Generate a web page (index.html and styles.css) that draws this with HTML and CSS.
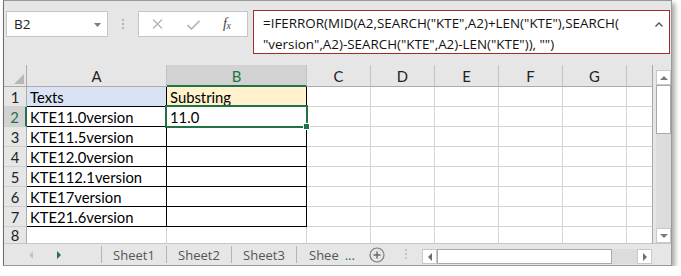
FILE: index.html
```html
<!DOCTYPE html>
<html>
<head>
<meta charset="utf-8">
<link rel="stylesheet" href="styles.css">
</head>
<body>
<div class="win">
  <div class="fbar">
    <div class="namebox"><span class="nb-text">B2</span>
      <svg class="nb-arrow" width="8" height="4" viewBox="0 0 8 4"><path d="M0 0H7L3.5 4Z" fill="#7a7a7a"/></svg>
    </div>
    <div class="vdots"><svg width="3" height="11" viewBox="0 0 3 11"><rect x="0" y="0" width="2" height="2" fill="#b5b5b5"/><rect x="0" y="4" width="2" height="2" fill="#b5b5b5"/><rect x="0" y="8" width="2" height="2" fill="#b5b5b5"/></svg></div>
    <div class="btns">
      <svg class="ic-x" width="11" height="10" viewBox="0 0 11 10"><path d="M1 0.5L10 9.5M10 0.5L1 9.5" stroke="#b3b3b3" stroke-width="1.3" fill="none"/></svg>
      <svg class="ic-ok" width="13" height="10" viewBox="0 0 13 10"><path d="M0.5 5L4.5 9L12.5 0.8" stroke="#b3b3b3" stroke-width="1.6" fill="none"/></svg>
      <span class="fx">f<sub>x</sub></span>
    </div>
    <div class="formula">
      <div class="ftext">=IFERROR(MID(A2,SEARCH("KTE",A2)+LEN("KTE"),SEARCH(<br>"version",A2)-SEARCH("KTE",A2)-LEN("KTE")), "")</div>
      <svg class="caret" width="8" height="5" viewBox="0 0 8 5"><path d="M0.5 4.5L4 1L7.5 4.5" stroke="#555" stroke-width="1.4" fill="none"/></svg>
    </div>
  </div>
  <div class="sheet">
    <div class="grid">
      <div class="ch corner"><svg width="10" height="10" viewBox="0 0 10 10"><path d="M10 0V10H0Z" fill="#b7b7b7"/></svg></div>
      <div class="ch">A</div><div class="ch sel">B</div><div class="ch">C</div><div class="ch">D</div><div class="ch">E</div><div class="ch">F</div><div class="ch">G</div><div class="ch last"></div>

      <div class="rh">1</div><div class="c bk a1">Texts</div><div class="c bk b1">Substring</div><div class="c"></div><div class="c"></div><div class="c"></div><div class="c"></div><div class="c"></div><div class="c last"></div>
      <div class="rh sel">2</div><div class="c bk">KTE11.0version</div><div class="c bk">11.0</div><div class="c"></div><div class="c"></div><div class="c"></div><div class="c"></div><div class="c"></div><div class="c last"></div>
      <div class="rh">3</div><div class="c bk">KTE11.5version</div><div class="c bk"></div><div class="c"></div><div class="c"></div><div class="c"></div><div class="c"></div><div class="c"></div><div class="c last"></div>
      <div class="rh">4</div><div class="c bk">KTE12.0version</div><div class="c bk"></div><div class="c"></div><div class="c"></div><div class="c"></div><div class="c"></div><div class="c"></div><div class="c last"></div>
      <div class="rh">5</div><div class="c bk">KTE112.1version</div><div class="c bk"></div><div class="c"></div><div class="c"></div><div class="c"></div><div class="c"></div><div class="c"></div><div class="c last"></div>
      <div class="rh">6</div><div class="c bk">KTE17version</div><div class="c bk"></div><div class="c"></div><div class="c"></div><div class="c"></div><div class="c"></div><div class="c"></div><div class="c last"></div>
      <div class="rh">7</div><div class="c bk">KTE21.6version</div><div class="c bk"></div><div class="c"></div><div class="c"></div><div class="c"></div><div class="c"></div><div class="c"></div><div class="c last"></div>
      <div class="rh r8">8</div><div class="c r8"></div><div class="c r8"></div><div class="c r8"></div><div class="c r8"></div><div class="c r8"></div><div class="c r8"></div><div class="c r8"></div><div class="c r8 last"></div>

      <div class="active"></div>
      <div class="handle"></div>
    </div>
    <div class="vscroll">
      <div class="vbtn up"><svg width="8" height="4" viewBox="0 0 8 4"><path d="M0 4H8L4 0Z" fill="#7a7a7a"/></svg></div>
      <div class="vthumb"></div>
      <div class="vtrack"></div>
      <div class="vbtn down"><svg width="8" height="4" viewBox="0 0 8 4"><path d="M0 0H8L4 4Z" fill="#7a7a7a"/></svg></div>
    </div>
  </div>
  <div class="tabbar">
    <div class="navs">
      <svg width="4" height="8" viewBox="0 0 4 8"><path d="M4 0V8L0 4Z" fill="#c4c4c4"/></svg>
      <svg width="4" height="8" viewBox="0 0 4 8"><path d="M0 0V8L4 4Z" fill="#217346"/></svg>
    </div>
    <div class="tab">Sheet1</div>
    <div class="tab">Sheet2</div>
    <div class="tab">Sheet3</div>
    <div class="tab more"><span>Shee</span><span class="ell">...</span></div>
    <div class="plus"><svg width="16" height="16" viewBox="0 0 16 16"><circle cx="8" cy="8" r="7" fill="none" stroke="#7c7c7c" stroke-width="1.2"/><path d="M8 4.5V11.5M4.5 8H11.5" stroke="#6a6a6a" stroke-width="1.4"/></svg></div>
    <div class="hdots"><svg width="2" height="11" viewBox="0 0 2 11"><rect x="0" y="0" width="2" height="2" fill="#c4c4c4"/><rect x="0" y="4" width="2" height="2" fill="#c4c4c4"/><rect x="0" y="8" width="2" height="2" fill="#c4c4c4"/></svg></div>
    <div class="hscroll">
      <div class="hbtn"><svg width="4" height="8" viewBox="0 0 4 8"><path d="M4 0V8L0 4Z" fill="#6d6d6d"/></svg></div>
      <div class="hthumb"></div>
      <div class="htrack"></div>
      <div class="hbtn"><svg width="4" height="8" viewBox="0 0 4 8"><path d="M0 0V8L4 4Z" fill="#6d6d6d"/></svg></div>
    </div>
  </div>
</div>
</body>
</html>
```
FILE: styles.css
```css
* { box-sizing: border-box; }
body {
  margin: 0;
  background: #ffffff;
  font-family: "Lato", "Liberation Sans", sans-serif;
}
.win {
  margin-left: 3px;
  width: 669px;
  height: 266px;
  background: #e6e6e6;
  border: 1px solid #9a9a9a;
  border-left-color: #6e6e6e;
  box-shadow: 3px 3px 5px rgba(0,0,0,0.35);
  display: flex;
  flex-direction: column;
}
.fbar {
  height: 64px;
  display: flex;
  align-items: flex-start;
  padding-left: 2px;
  flex: none;
}
.namebox {
  width: 102px;
  height: 26px;
  margin-top: 10px;
  background: #fff;
  border: 1px solid #c6c6c6;
  display: flex;
  align-items: center;
  justify-content: space-between;
  padding: 0 5px 0 7px;
  font-family: "Open Sans", sans-serif;
  font-size: 13.5px;
  color: #222;
}
.nb-arrow { margin-top: 1px; }
.vdots {
  width: 30px;
  height: 26px;
  margin-top: 10px;
  display: flex;
  align-items: center;
  justify-content: center;
  padding-left: 1px;
}
.btns {
  width: 110px;
  height: 26px;
  margin-top: 10px;
  background: #fff;
  border: 1px solid #c6c6c6;
  display: flex;
  align-items: center;
  padding-left: 13px;
}
.ic-x { margin-right: 24px; }
.ic-ok { margin-right: 23px; margin-top: 1px; }
.fx {
  font-family: "Liberation Serif", serif;
  font-style: italic;
  font-size: 14px;
  color: #444;
  letter-spacing: -0.5px;
}
.fx sub { font-size: 10px; vertical-align: -1px; }
.formula {
  width: 417px;
  height: 44px;
  margin-top: 9px;
  margin-left: 5px;
  background: #fff;
  border: 1px solid #a52a2a;
  display: flex;
  justify-content: space-between;
  padding: 2px 6px 0 9px;
}
.ftext {
  font-family: "Open Sans", sans-serif;
  font-size: 13.4px;
  line-height: 21px;
  color: #111;
  white-space: nowrap;
}
.caret { margin-top: 9px; }

.sheet {
  height: 179px;
  display: flex;
  flex: none;
}
.grid {
  position: relative;
  display: grid;
  grid-template-columns: 23px 140px 140px 64px 64px 64px 64px 64px 26px;
  grid-template-rows: 22px repeat(7, 20px) 17px;
  background: #fff;
  font-size: 14.8px;
  color: #000;
}
.ch {
  background: #e6e6e6;
  border-right: 1px solid #c2c2c2;
  border-bottom: 1px solid #ababab;
  display: flex;
  align-items: center;
  justify-content: center;
  padding-top: 1px;
  color: #222;
}
.ch.corner {
  border-right-color: #ababab;
  align-items: flex-end;
  justify-content: flex-end;
  padding: 0 2px 2px 0;
}
.ch.sel {
  background: #d2d2d2;
  color: #217346;
  border-bottom: 2px solid #217346;
}
.ch.last { border-right: 1px solid #a6a6a6; }
.rh {
  background: #e6e6e6;
  border-right: 1px solid #ababab;
  border-bottom: 1px solid #d0d0d0;
  display: flex;
  align-items: center;
  justify-content: center;
  color: #222;
}
.rh.sel {
  background: #d2d2d2;
  color: #217346;
  border-right: 2px solid #217346;
}
.c {
  border-right: 1px solid #d4d4d4;
  border-bottom: 1px solid #d4d4d4;
  padding-left: 3px;
  display: flex;
  align-items: center;
  white-space: nowrap;
}
.c.last { border-right: 1px solid #a6a6a6; }
.c.bk {
  border-right-color: #000;
  border-bottom-color: #000;
}
.c.a1 { background: #dae3f3; }
.c.b1 { background: #fff2cc; }
.r8 { border-bottom: 1px solid #c6c6c6; }
.rh.r8 { border-bottom: 1px solid #c6c6c6; }
.active {
  position: absolute;
  left: 161px;
  top: 40px;
  width: 143px;
  height: 23px;
  border: 2px solid #217346;
}
.handle {
  position: absolute;
  left: 299px;
  top: 58px;
  width: 7px;
  height: 7px;
  background: #217346;
  border: 1px solid #fff;
}
.vscroll {
  width: 18px;
  display: flex;
  flex-direction: column;
  padding: 5px 0 0 3px;
  border-bottom: 1px solid #c6c6c6;
}
.vbtn {
  width: 15px;
  height: 15px;
  background: #fff;
  border: 1px solid #c8c8c8;
  display: flex;
  align-items: center;
  justify-content: center;
}
.vthumb {
  width: 15px;
  height: 49px;
  background: #fff;
  border: 1px solid #a9a9a9;
}
.vtrack {
  flex: 1;
  width: 15px;
  background: #dcdcdc;
}

.tabbar {
  height: 21px;
  display: flex;
  align-items: center;
  flex: none;
  font-family: "Open Sans", sans-serif;
  font-size: 13px;
  color: #555;
}
.navs {
  width: 97px;
  display: flex;
  align-items: center;
  padding-left: 25px;
  gap: 24px;
}
.tab {
  width: 65px;
  height: 17px;
  border-left: 1px solid #b5b5b5;
  display: flex;
  align-items: center;
  justify-content: center;
}
.tab.more {
  width: 65px;
  justify-content: flex-start;
  padding-left: 12px;
}
.ell { color: #217346; margin-left: 6px; }
.plus {
  width: 16px;
  height: 16px;
  margin-left: 8px;
}
.hdots {
  width: 2px;
  margin-left: 20px;
  height: 11px;
  display: flex;
}
.hscroll {
  display: flex;
  margin-left: 15px;
  height: 15px;
  margin-top: 5px;
  align-self: flex-start;
}
.hbtn {
  width: 15px;
  height: 15px;
  background: #fff;
  border: 1px solid #c8c8c8;
  display: flex;
  align-items: center;
  justify-content: center;
}
.hthumb {
  width: 175px;
  height: 15px;
  background: #fff;
  border: 1px solid #a9a9a9;
}
.htrack {
  width: 25px;
  height: 15px;
  background: #dcdcdc;
}
```
